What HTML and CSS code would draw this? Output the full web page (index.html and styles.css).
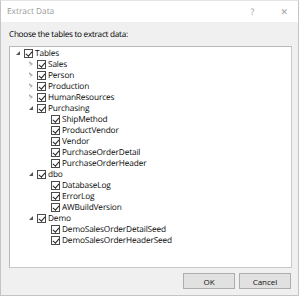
FILE: index.html
```html
<!DOCTYPE html>
<html lang="en">
<head>
  <meta charset="UTF-8">
  <title>Extract Data</title>
  <link rel="stylesheet" href="styles.css">
</head>
<body>

  <div class="window">
    <div class="titlebar">
      <span class="title">Extract Data</span>
      <span class="title-btn help">?</span>
      <span class="title-btn close">&#x2715;</span>
    </div>

    <div class="body">
      <div class="prompt">Choose the tables to extract data:</div>

      <div class="tree">
        <div class="row"><span class="exp open"></span><span class="cb"></span>Tables</div>
        <div class="row lvl1"><span class="exp closed"></span><span class="cb"></span>Sales</div>
        <div class="row lvl1"><span class="exp closed"></span><span class="cb"></span>Person</div>
        <div class="row lvl1"><span class="exp closed"></span><span class="cb"></span>Production</div>
        <div class="row lvl1"><span class="exp closed"></span><span class="cb"></span>HumanResources</div>
        <div class="row lvl1"><span class="exp open"></span><span class="cb"></span>Purchasing</div>
        <div class="row lvl2"><span class="exp"></span><span class="cb"></span>ShipMethod</div>
        <div class="row lvl2"><span class="exp"></span><span class="cb"></span>ProductVendor</div>
        <div class="row lvl2"><span class="exp"></span><span class="cb"></span>Vendor</div>
        <div class="row lvl2"><span class="exp"></span><span class="cb"></span>PurchaseOrderDetail</div>
        <div class="row lvl2"><span class="exp"></span><span class="cb"></span>PurchaseOrderHeader</div>
        <div class="row lvl1"><span class="exp open"></span><span class="cb"></span>dbo</div>
        <div class="row lvl2"><span class="exp"></span><span class="cb"></span>DatabaseLog</div>
        <div class="row lvl2"><span class="exp"></span><span class="cb"></span>ErrorLog</div>
        <div class="row lvl2"><span class="exp"></span><span class="cb"></span>AWBuildVersion</div>
        <div class="row lvl1"><span class="exp open"></span><span class="cb"></span>Demo</div>
        <div class="row lvl2"><span class="exp"></span><span class="cb"></span>DemoSalesOrderDetailSeed</div>
        <div class="row lvl2"><span class="exp"></span><span class="cb"></span>DemoSalesOrderHeaderSeed</div>
      </div>

      <div class="buttons">
        <button class="btn">OK</button>
        <button class="btn">Cancel</button>
      </div>
    </div>
  </div>

</body>
</html>
```
FILE: styles.css
```css
* {
  box-sizing: border-box;
  margin: 0;
  padding: 0;
}

body {
  width: 300px;
  height: 297px;
  background: #fff;
  font-family: "Open Sans", "Noto Sans", sans-serif;
  text-rendering: geometricPrecision;
  overflow: hidden;
}

/* Window frame */
.window {
  width: 299px;
  height: 296px;
  border: 1px solid #c4c4c4;
  border-top-color: #e4e4e4;
  display: flex;
  flex-direction: column;
  background: #f0f0f0;
}

.titlebar {
  height: 21px;
  background: #fff;
  display: flex;
  align-items: center;
  padding-left: 6px;
  color: #999;
  font-size: 8.3px;
}

.title {
  flex: 1;
}

.title-btn {
  color: #a0a0a0;
  font-size: 9px;
}

.help {
  margin-right: 26px;
}

.close {
  margin-right: 10px;
  font-size: 9px;
}

/* Body */
.body {
  flex: 1;
  display: flex;
  flex-direction: column;
  padding: 0 6px 0 8px;
}

.prompt {
  font-size: 8.2px;
  letter-spacing: -0.28px;
  color: #000;
  height: 24px;
  line-height: 24px;
  padding-top: 1px;
}

.tree {
  height: 222px;
  background: #fff;
  border: 1px solid #b9b9b9;
  border-color: #b9b9b9 #c8c8c8 #c8c8c8 #b9b9b9;
  padding: 1px 0 0 3px;
  overflow: hidden;
}

.row {
  height: 11px;
  display: flex;
  align-items: center;
  font-size: 8.3px;
  letter-spacing: -0.15px;
  color: #0a0a0a;
  white-space: nowrap;
}

.lvl1 {
  padding-left: 13px;
}

.lvl2 {
  padding-left: 27px;
}

/* Expander glyphs */
.exp {
  width: 10px;
  height: 9px;
  margin-right: 1px;
  position: relative;
}

.exp.closed::before {
  content: "";
  position: absolute;
  left: 3px;
  top: 1px;
  border-left: 4px solid #b0b0b0;
  border-top: 3.5px solid transparent;
  border-bottom: 3.5px solid transparent;
}

.exp.closed::after {
  content: "";
  position: absolute;
  left: 3px;
  top: 2.5px;
  border-left: 2px solid #fff;
  border-top: 2px solid transparent;
  border-bottom: 2px solid transparent;
}

.exp.open::before {
  content: "";
  position: absolute;
  left: 3px;
  top: 2px;
  border-right: 4px solid #555;
  border-top: 4px solid transparent;
}

/* Checkboxes */
.cb {
  width: 9px;
  height: 9px;
  border: 1px solid #4a4a4a;
  background: #fff;
  margin-right: 2px;
  position: relative;
  flex-shrink: 0;
}

.cb::after {
  content: "";
  position: absolute;
  left: 2px;
  top: -0.5px;
  width: 2.5px;
  height: 5px;
  border-right: 1.5px solid #222;
  border-bottom: 1.5px solid #222;
  transform: rotate(40deg);
}

/* Buttons */
.buttons {
  display: flex;
  justify-content: flex-end;
  gap: 4px;
  padding: 5px 1px 0 0;
}

.btn {
  width: 52px;
  height: 16px;
  background: #e1e1e1;
  border: 1px solid #adadad;
  font-family: "Open Sans", "Noto Sans", sans-serif;
  font-size: 8px;
  color: #111;
}
```
